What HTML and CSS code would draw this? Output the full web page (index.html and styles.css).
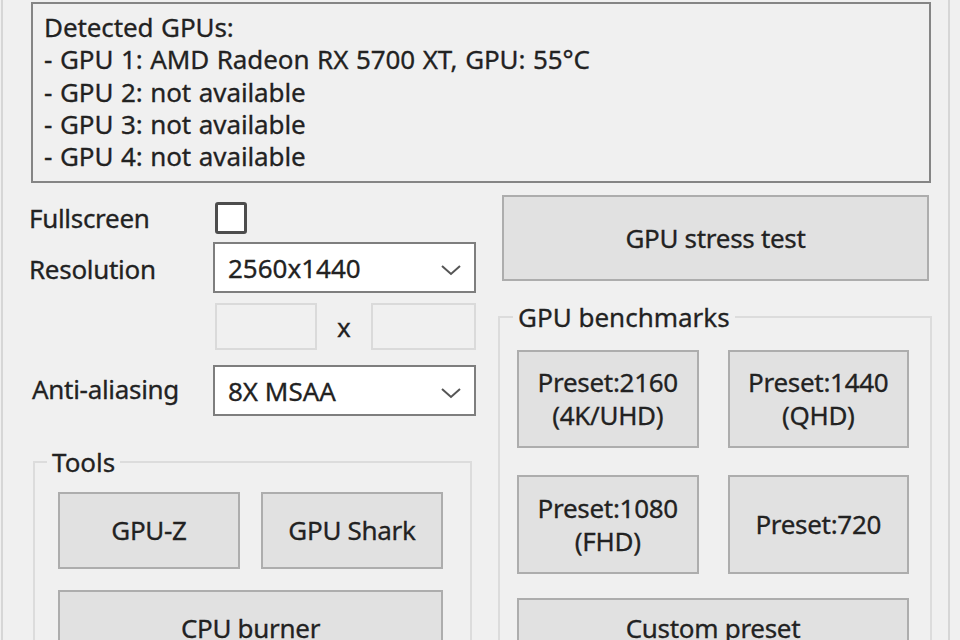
FILE: index.html
```html
<!DOCTYPE html>
<html lang="en">
<head>
    <meta charset="UTF-8">
    <meta name="viewport" content="width=device-width, initial-scale=1.0">
    <title>GPU Stress Test</title>
    <link rel="stylesheet" href="styles.css">
</head>
<body>
    <div class="window">
        <div class="gpu-list">
            <div>Detected GPUs:</div>
            <div>- GPU 1: AMD Radeon RX 5700 XT, GPU: 55°C</div>
            <div>- GPU 2: not available</div>
            <div>- GPU 3: not available</div>
            <div>- GPU 4: not available</div>
        </div>

        <div class="main">
            <div class="left">
                <div class="row row-check">
                    <span class="label">Fullscreen</span>
                    <span class="checkbox"></span>
                </div>
                <div class="row row-select">
                    <span class="label">Resolution</span>
                    <div class="select">
                        <span>2560x1440</span>
                        <svg class="chevron" width="22" height="12" viewBox="0 0 22 12"><path d="M2 2 L11 10 L20 2" fill="none" stroke="#555" stroke-width="2"/></svg>
                    </div>
                </div>
                <div class="row row-custom">
                    <span class="label"></span>
                    <div class="custom-res">
                        <span class="input input-w"></span>
                        <span class="times">x</span>
                        <span class="input input-h"></span>
                    </div>
                </div>
                <div class="row row-select row-aa">
                    <span class="label label-aa">Anti-aliasing</span>
                    <div class="select">
                        <span>8X MSAA</span>
                        <svg class="chevron" width="22" height="12" viewBox="0 0 22 12"><path d="M2 2 L11 10 L20 2" fill="none" stroke="#555" stroke-width="2"/></svg>
                    </div>
                </div>

                <fieldset class="group tools">
                    <legend>Tools</legend>
                    <div class="btn-grid tools-grid">
                        <button class="btn">GPU-Z</button>
                        <button class="btn">GPU Shark</button>
                        <button class="btn wide">CPU burner</button>
                    </div>
                </fieldset>
            </div>

            <div class="right">
                <button class="btn stress">GPU stress test</button>
                <fieldset class="group bench">
                    <legend>GPU benchmarks</legend>
                    <div class="btn-grid bench-grid">
                        <button class="btn">Preset:2160<br>(4K/UHD)</button>
                        <button class="btn">Preset:1440<br>(QHD)</button>
                        <button class="btn">Preset:1080<br>(FHD)</button>
                        <button class="btn">Preset:720</button>
                        <button class="btn wide custom">Custom preset</button>
                    </div>
                </fieldset>
            </div>
        </div>
    </div>
</body>
</html>
```

FILE: styles.css
```css
body {
    margin: 0;
    background: #f0f0f0;
    font-family: "Noto Sans", "Open Sans", sans-serif;
    font-size: 26px;
    color: #222;
    -webkit-text-stroke: 0.3px #222;
    overflow: hidden;
}
.window {
    width: 949px;
    height: 640px;
    margin-left: 1px;
    padding: 2px 0 0 28px;
    box-sizing: border-box;
    border-left: 2px solid #d6d6d6;
    border-right: 2px solid #d6d6d6;
}
.gpu-list {
    width: 900px;
    height: 181px;
    box-sizing: border-box;
    border: 2px solid #858585;
    padding: 7px 11px;
    line-height: 32.3px;
    letter-spacing: -0.1px;
    word-spacing: 1px;
}
.main {
    display: flex;
    gap: 22px;
    margin-top: 12px;
}
.left {
    width: 445px;
    padding-top: 5px;
}
.right {
    width: 434px;
}
.row {
    display: grid;
    grid-template-columns: 182px 263px;
    align-items: center;
}
.label {
    margin-left: -2px;
    letter-spacing: -0.3px;
}
.row-select .label {
    padding-top: 3px;
}
.label-aa {
    margin-left: 1px;
}
.row-aa .label {
    padding-top: 0;
    margin-bottom: 3px;
}
.row-check {
    height: 32px;
}
.checkbox {
    width: 26px;
    height: 26px;
    margin-left: 2px;
    border: 3px solid #4d4d4d;
    border-radius: 3px;
    background: #fff;
}
.row-select {
    margin-top: 10px;
}
.row-aa {
    margin-top: 15px;
}
.select {
    height: 51px;
    box-sizing: border-box;
    border: 2px solid #7e7e7e;
    background: #fff;
    display: flex;
    align-items: center;
    justify-content: space-between;
    padding: 0 12px 0 13px;
}
.chevron {
    margin-top: 4px;
}
.row-custom {
    margin-top: 10px;
}
.custom-res {
    display: flex;
    align-items: center;
    height: 47px;
}
.input {
    height: 47px;
    box-sizing: border-box;
    border: 2px solid #dadada;
    background: #f0f0f0;
}
.input-w {
    width: 102px;
    margin-left: 2px;
}
.input-h {
    width: 105px;
}
.times {
    width: 54px;
    text-align: center;
}
.group {
    margin: 0;
    border: 2px solid #dcdcdc;
    min-width: 0;
}
.group legend {
    padding: 0 5px;
    line-height: 32px;
}
.tools {
    width: 439px;
    box-sizing: border-box;
    margin: 30px 0 0 2px;
    padding: 14px 27px 0 23px;
    height: 220px;
}
.tools legend {
    margin-left: -11px;
}
.bench {
    margin-top: 20px;
    padding: 17px 21px 0 17px;
    height: 360px;
}
.bench legend {
    margin-left: -4px;
}
.btn-grid {
    display: grid;
    grid-template-columns: 1fr 1fr;
}
.tools-grid {
    column-gap: 21px;
    row-gap: 21px;
    grid-auto-rows: 77px;
}
.bench-grid {
    column-gap: 29px;
    row-gap: 27px;
    grid-template-rows: 98px 99px 58px;
}
.bench-grid .custom {
    margin-top: -3px;
}
.btn {
    font: inherit;
    color: #222;
    background: #e1e1e1;
    border: 2px solid #adadad;
    line-height: 33px;
    padding: 0;
    letter-spacing: -0.3px;
}
.wide {
    grid-column: span 2;
}
.stress {
    width: 427px;
    height: 86px;
    margin-left: 4px;
    display: block;
}
```
